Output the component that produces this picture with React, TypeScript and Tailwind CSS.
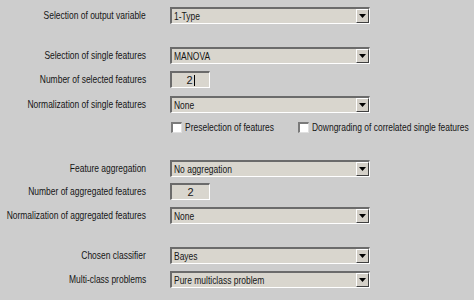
import React from 'react';

const font = { fontFamily: '"Liberation Sans", Arial, sans-serif' };

const Squeeze: React.FC<{ children: React.ReactNode; right?: boolean }> = ({ children, right }) => (
  <span
    className={`inline-block shrink-0 whitespace-nowrap scale-x-[0.77] ${right ? 'origin-right' : 'origin-left'}`}
  >
    {children}
  </span>
);

const Arrow = () => (
  <svg width="7" height="4" viewBox="0 0 7 4" className="block">
    <polygon points="0,0 7,0 3.5,4" fill="#000" />
  </svg>
);

const Select: React.FC<{ value: string }> = ({ value }) => (
  <div className="flex h-[17px] w-[200px] border-t-2 border-l-2 border-b border-r border-t-[#6b6b6b] border-l-[#6b6b6b] border-b-white border-r-white bg-[#d9d6ce]">
    <div className="flex flex-1 items-center overflow-hidden pl-[2px] text-[11px] text-[#151515]">
      <Squeeze>{value}</Squeeze>
    </div>
    <div className="flex h-full w-[13px] items-center justify-center border border-t-white border-l-white border-b-[#404040] border-r-[#404040] bg-[#d4d0c8]">
      <Arrow />
    </div>
  </div>
);

const NumberBox: React.FC<{ value: string; caret?: boolean }> = ({ value, caret }) => (
  <div className="flex h-[17px] w-[40px] items-center justify-center border-t-2 border-l-2 border-b border-r border-t-[#6b6b6b] border-l-[#6b6b6b] border-b-white border-r-white bg-[#d9d6ce] text-[11px] text-[#151515]">
    <span className="inline-flex items-center">
      {value}
      {caret && <span className="ml-[1px] inline-block h-[11px] w-px bg-black" />}
    </span>
  </div>
);

const Checkbox = () => (
  <div className="h-[11px] w-[11px] shrink-0 border-t-2 border-l-2 border-b border-r border-t-[#7a7a7a] border-l-[#7a7a7a] border-b-[#e0e0e0] border-r-[#e0e0e0] bg-white" />
);

const Row: React.FC<{ label?: string; className?: string; children: React.ReactNode }> = ({
  label,
  className = '',
  children,
}) => (
  <div className={`flex h-[17px] items-center ${className}`}>
    <div className="flex w-[146px] shrink-0 justify-end text-[11px] text-[#151515]">
      {label && <Squeeze right>{label}</Squeeze>}
    </div>
    <div className="ml-[24px] flex items-center">{children}</div>
  </div>
);

export default function App() {
  return (
    <div className="h-[300px] w-[474px] overflow-hidden bg-[#cdcdcd] pt-[7px]" style={font}>
      <Row label="Selection of output variable">
        <Select value="1-Type" />
      </Row>

      <Row label="Selection of single features" className="mt-[23px]">
        <Select value="MANOVA" />
      </Row>
      <Row label="Number of selected features" className="mt-[7px]">
        <NumberBox value="2" caret />
      </Row>
      <Row label="Normalization of single features" className="mt-[8px]">
        <Select value="None" />
      </Row>
      <Row className="mt-[6px]">
        <div className="flex w-[128px] items-center text-[11px] text-[#151515]">
          <div className="ml-[1px]">
            <Checkbox />
          </div>
          <div className="ml-[3px] flex">
            <Squeeze>Preselection of features</Squeeze>
          </div>
        </div>
        <div className="flex items-center text-[11px] text-[#151515]">
          <Checkbox />
          <div className="ml-[3px] flex">
            <Squeeze>Downgrading of correlated single features</Squeeze>
          </div>
        </div>
      </Row>

      <Row label="Feature aggregation" className="mt-[24px]">
        <Select value="No aggregation" />
      </Row>
      <Row label="Number of aggregated features" className="mt-[6px]">
        <NumberBox value="2" />
      </Row>
      <Row label="Normalization of aggregated features" className="mt-[7px]">
        <Select value="None" />
      </Row>

      <Row label="Chosen classifier" className="mt-[23px]">
        <Select value="Bayes" />
      </Row>
      <Row label="Multi-class problems" className="mt-[7px]">
        <Select value="Pure multiclass problem" />
      </Row>
    </div>
  );
}
